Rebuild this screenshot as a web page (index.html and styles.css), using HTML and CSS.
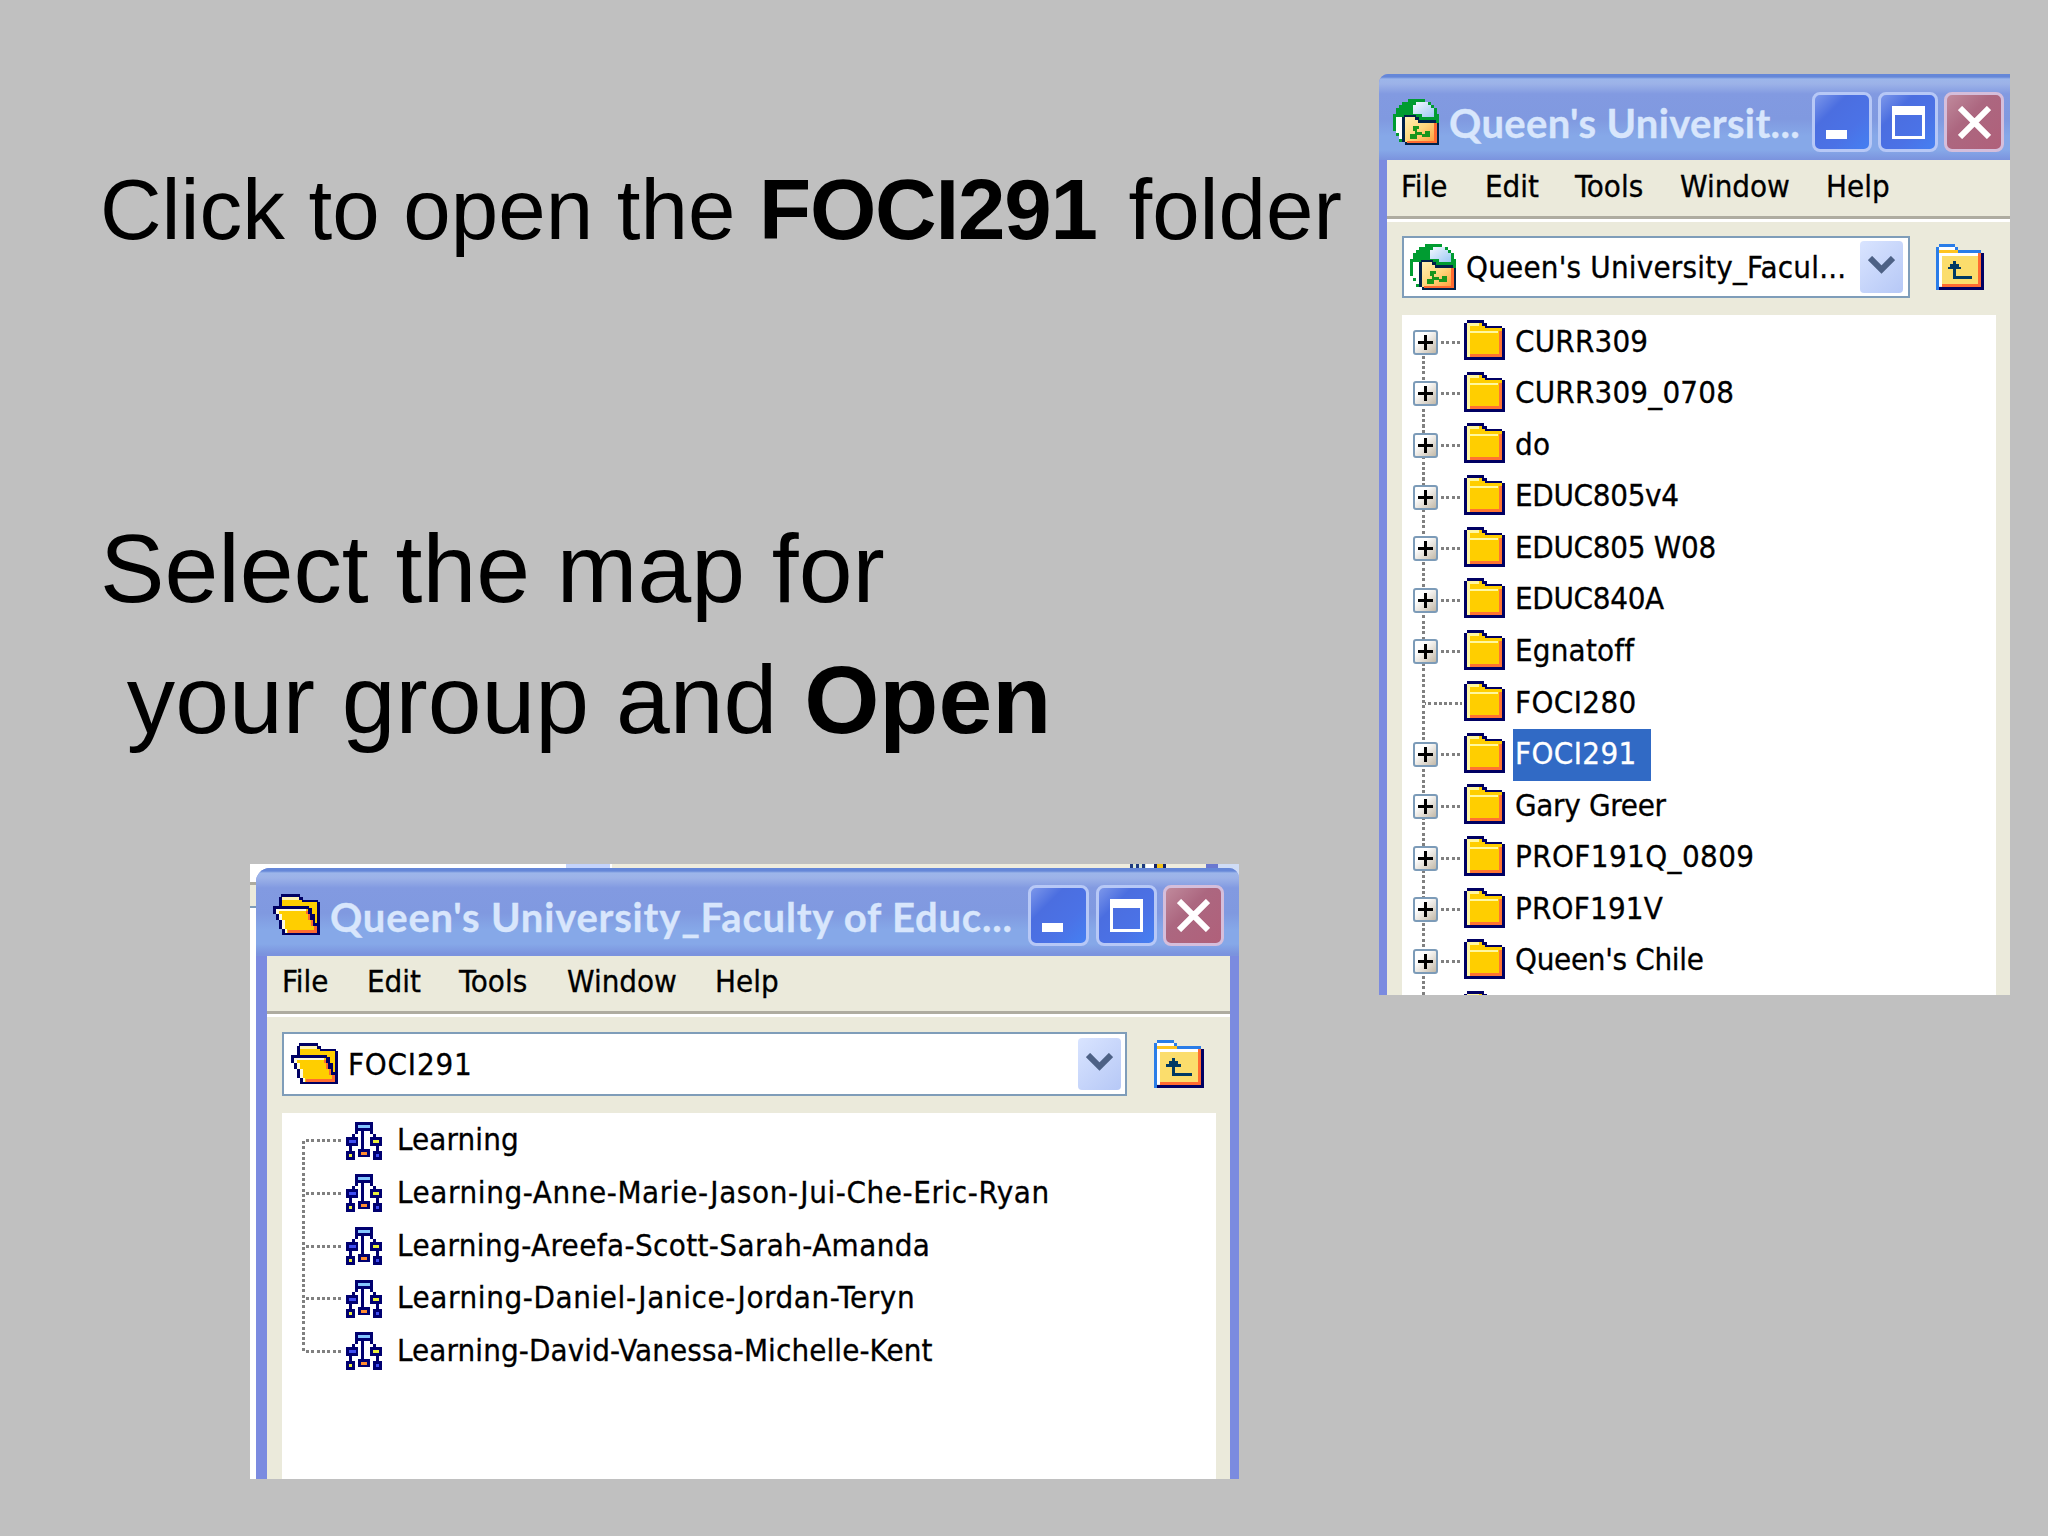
FILE: index.html
```html
<!DOCTYPE html>
<html lang="en">
<head>
  <meta charset="UTF-8">
  <meta name="viewport" content="width=device-width, initial-scale=1.0">
  <title>Open the FOCI291 folder</title>
  <link rel="stylesheet" href="styles.css">
</head>
<body>
  <!-- shared icons -->
  <svg class="defs" width="0" height="0">
    <defs>
      <linearGradient id="peach" x1="0" y1="0" x2="1" y2="1">
        <stop offset="0" stop-color="#ffefb4"/>
        <stop offset="0.5" stop-color="#ffd77c"/>
        <stop offset="1" stop-color="#ff9c3c"/>
      </linearGradient>
      <linearGradient id="ice" x1="0" y1="0" x2="1" y2="1">
        <stop offset="0" stop-color="#f4f8ff"/>
        <stop offset="1" stop-color="#9cc8f4"/>
      </linearGradient>
    </defs>
    <symbol id="folder" viewBox="0 0 41 40">
      <path fill="#000063" d="M3 0H20V3H23V5.500H38V8H41V40H0V3H3z"/>
      <path fill="#ffce00" d="M3 3H18V6H21V8H38V37H3z"/>
      <path fill="#fff7a0" d="M3 3H15V5.500H5.500V10.500H34V13H5.500V37H3z"/>
      <path fill="#ff7331" d="M35 10.500H38V37H6V34H35z"/>
    </symbol>
    <symbol id="open" viewBox="0 0 47 41">
      <path fill="#000063" d="M8 0H27V3H30V5.500H44.500V8H47V41H8.500V35H5.500V26H3V20H0V12H6V3H8z"/>
      <path fill="#ffce00" d="M8.500 3H26V6H29V8H44V29H42V20H39V14H36V12H8.500z"/>
      <path fill="#fff3b0" d="M8.500 3H26V5.500H8.500z"/>
      <path fill="#ffce00" d="M3 14.500H35V20H37V26H40V32H44V38.500H11.500V35H8.500V26H6V20H3z"/>
      <path fill="#fffbe0" d="M3 14.500H33V17H6V20H8.500V26H11.500V35H14V38.500H11.500V35H8.500V26H6V20H3z"/>
      <path fill="#ff6b31" d="M33 17H35V20H37V26H40V32H44V38.500H15V35.500H41V32H38V26H35V20H33z"/>
    </symbol>
    <symbol id="up" viewBox="0 0 50 48">
      <path fill="#2a7de8" d="M3 0H20V3H23V6H47V9H3V47.500H0V3H3z"/>
      <path fill="#000063" d="M47 9H50V47.500H3V44.500H47z"/>
      <path fill="#fff" d="M3 3H20V6H3zM3 9H44V44H3z"/>
      <path fill="#ffc421" d="M3 6H23V9H3z"/>
      <path fill="#fbdd6c" d="M6 12H44V42H6z"/>
      <path fill="#ff6b31" d="M44 9H47V44.500H6V41.500H44z"/>
      <path fill="#003a63" d="M17.500 18H20.500V21H23.500V24H26.500V26.500H20.500V33H38V36H17.500V26.500H12V24H14.500V21H17.500z"/>
    </symbol>
    <symbol id="map" viewBox="0 0 36 38">
      <path fill="#000070" d="M9 0H26.500V8.500H27V12H29.500V14.500H36V23.500H32.500V29H36V38H26.500V29H29.500V23.500H23.500V14.500H26.500V12H24V9H18V26.500H23.500V35H12V26.500H15V9H12V12H9V14.500H12V23.500H6V29H9V38H0V29H3V23.500H0V14.500H6V12H9z"/>
      <path fill="#84c6ff" d="M12 3H23.500V6H12z"/>
      <path fill="#3f4ef0" d="M3 17.500H9.500V20.500H3zM30 32H33V35H30z"/>
      <path fill="#eaf03c" d="M26.500 17.500H33V20.500H26.500zM3 32H6V35H3z"/>
      <path fill="#ff8c31" d="M15 29.500H21V32.500H15z"/>
    </symbol>
    <symbol id="globe" viewBox="0 0 46 46">
      <path fill="#009c31" d="M15 0H32V3H38V6H41V9H44V15H46V24H9V43H6V37H3V32H0V15H3V9H6V6H9V3H15z"/>
      <path fill="#fff" d="M3 18H9V40H6V34H3z"/>
      <path fill="url(#ice)" d="M23 3H35V6H38V9H41V18H29V15H20V6H23z"/>
      <path fill="#00214a" d="M11 15.500H23V18H26V21H43V24H46V46H12V43H9V18H11z"/>
      <path fill="url(#peach)" d="M12 18H22V21H25V24H43V43H12z"/>
      <path fill="#ff6b31" d="M41 24H43.500V43.500H14V41.500H41z"/>
      <path fill="#18961c" d="M20 27H26V30H24V33H29V35H32V32H37V38H29V36H24V40H17V35H22V32H20z"/>
    </symbol>
    <symbol id="max" viewBox="0 0 33 33">
      <path fill="#fff" fill-rule="evenodd" d="M0 0H33V33H0zM3 9V30H30V9z"/>
    </symbol>
    <symbol id="close" viewBox="0 0 33 33">
      <path stroke="#fff" stroke-width="6" d="M2 2L31 31M31 2L2 31"/>
    </symbol>
    <symbol id="arrow" viewBox="0 0 27 18">
      <path fill="none" stroke="#4d6185" stroke-width="6" d="M2 2L13.500 13.500L25 2"/>
    </symbol>
  </svg>

  <div class="slide">
    <p class="step first">Click to open the <b>FOCI291</b> folder</p>
    <p class="step second">Select the map for<br>&nbsp;your group and <b>Open</b></p>

    <div class="shot tree-shot">
      <div class="window">
        <div class="titlebar">
          <svg class="title-icon"><use href="#globe"/></svg>
          <span class="title">Queen's Universit...</span>
          <span class="btn min"></span>
          <span class="btn max"><svg><use href="#max"/></svg></span>
          <span class="btn close"><svg><use href="#close"/></svg></span>
        </div>
        <div class="menu">
          <span>File</span><span>Edit</span><span>Tools</span><span>Window</span><span>Help</span>
        </div>
        <div class="toolbar">
          <div class="combo">
            <svg class="combo-icon"><use href="#globe"/></svg>
            <span class="combo-text">Queen's University_Facul...</span>
            <span class="drop"><svg><use href="#arrow"/></svg></span>
          </div>
          <svg class="up"><use href="#up"/></svg>
        </div>
        <ul class="list tree">
          <li><i class="plus"></i><svg><use href="#folder"/></svg><span>CURR309</span></li>
          <li><i class="plus"></i><svg><use href="#folder"/></svg><span>CURR309_0708</span></li>
          <li><i class="plus"></i><svg><use href="#folder"/></svg><span>do</span></li>
          <li><i class="plus"></i><svg><use href="#folder"/></svg><span class="tight">EDUC805v4</span></li>
          <li><i class="plus"></i><svg><use href="#folder"/></svg><span class="tight">EDUC805 W08</span></li>
          <li><i class="plus"></i><svg><use href="#folder"/></svg><span class="tight">EDUC840A</span></li>
          <li><i class="plus"></i><svg><use href="#folder"/></svg><span>Egnatoff</span></li>
          <li class="leaf"><svg><use href="#folder"/></svg><span class="wide">FOCI280</span></li>
          <li><i class="plus"></i><svg><use href="#folder"/></svg><span class="selected">FOCI291</span></li>
          <li><i class="plus"></i><svg><use href="#folder"/></svg><span class="tight">Gary Greer</span></li>
          <li><i class="plus"></i><svg><use href="#folder"/></svg><span class="wide">PROF191Q_0809</span></li>
          <li><i class="plus"></i><svg><use href="#folder"/></svg><span>PROF191V</span></li>
          <li><i class="plus"></i><svg><use href="#folder"/></svg><span class="tight">Queen's Chile</span></li>
          <li><i class="plus"></i><svg><use href="#folder"/></svg></li>
        </ul>
      </div>
    </div>

    <div class="shot map-shot">
      <!-- slivers of the window behind -->
      <div class="behind-top"><i class="b1"></i><i class="b2"></i><i class="b3"></i><i class="b4"></i><i class="b5"></i><i class="b6"></i><i class="b7"></i></div>
      <div class="behind-left"></div>
      <div class="window">
        <div class="titlebar">
          <svg class="title-icon"><use href="#open"/></svg>
          <span class="title">Queen's University_Faculty of Educ...</span>
          <span class="btn min"></span>
          <span class="btn max"><svg><use href="#max"/></svg></span>
          <span class="btn close"><svg><use href="#close"/></svg></span>
        </div>
        <div class="menu">
          <span>File</span><span>Edit</span><span>Tools</span><span>Window</span><span>Help</span>
        </div>
        <div class="toolbar">
          <div class="combo">
            <svg class="combo-icon"><use href="#open"/></svg>
            <span class="combo-text">FOCI291</span>
            <span class="drop"><svg><use href="#arrow"/></svg></span>
          </div>
          <svg class="up"><use href="#up"/></svg>
        </div>
        <ul class="list maps">
          <li><svg><use href="#map"/></svg><span>Learning</span></li>
          <li><svg><use href="#map"/></svg><span class="wide">Learning-Anne-Marie-Jason-Jui-Che-Eric-Ryan</span></li>
          <li><svg><use href="#map"/></svg><span class="medium">Learning-Areefa-Scott-Sarah-Amanda</span></li>
          <li><svg><use href="#map"/></svg><span class="wide">Learning-Daniel-Janice-Jordan-Teryn</span></li>
          <li><svg><use href="#map"/></svg><span>Learning-David-Vanessa-Michelle-Kent</span></li>
        </ul>
      </div>
    </div>
  </div>
</body>
</html>
```
FILE: styles.css
```css
* {
  box-sizing: border-box;
}
body {
  margin: 0;
  background: #c0c0c0;
}
.defs {
  position: absolute;
}
svg {
  display: block;
  flex: none;
  shape-rendering: crispEdges;
}
.slide {
  position: relative;
  width: 2048px;
  height: 1536px;
  overflow: hidden;
  font-family: "Liberation Sans", Arial, sans-serif;
  color: #000;
}
.step {
  margin: 0;
  padding-left: 100px;
  white-space: nowrap;
}
.first {
  padding-top: 161px;
  font-size: 85.3px;
  line-height: 98px;
}
.first b {
  margin-right: 8px;
  letter-spacing: -1.2px;
}
.second {
  padding-top: 244px;
  font-size: 96.7px;
  line-height: 131px;
}

/* windows */
.shot {
  position: absolute;
  overflow: hidden;
}
.tree-shot {
  left: 1379px;
  top: 74px;
  width: 631px;
  height: 921px;
}
.map-shot {
  left: 250px;
  top: 864px;
  width: 989px;
  height: 615px;
  padding: 4px 0 0 6px;
  background: #fff;
}
.window {
  height: 100%;
  display: flex;
  flex-direction: column;
  background: #7b8be0;
  border-radius: 9px 0 0 0;
  overflow: hidden;
  font-family: "DejaVu Sans Condensed", "DejaVu Sans", sans-serif;
  font-stretch: condensed;
  font-size: 31px;
  -webkit-text-stroke: 0.3px;
}
.map-shot .window {
  position: relative;
  border-radius: 14px 10px 0 0;
}
.titlebar {
  flex: none;
  display: flex;
  align-items: center;
  height: 86px;
  padding: 9px 6px 0 14px;
  background: linear-gradient(#6587d8 0, #6587d8 3px, #9db6ea 5px, #9cb2e8 10px, #829ae1 20px, #8099e0 45px, #86a8e8 62px, #86a8e8 76px, #7b93de 86px);
}
.map-shot .titlebar {
  height: 88px;
  padding: 7px 15px 0 17px;
}
.title-icon {
  width: 46px;
  height: 46px;
}
.map-shot .title-icon {
  width: 47px;
  height: 41px;
  margin-bottom: 2px;
}
.title {
  flex: 1;
  padding: 3px 0 0 10px;
  font: bold 40px/50px Lato, sans-serif;
  letter-spacing: 0.35px;
  white-space: nowrap;
  color: #d8e6fc;
}
.map-shot .title {
  letter-spacing: 0.8px;
}
.btn {
  flex: none;
  width: 60px;
  height: 60px;
  margin-left: 6px;
  border: 3px solid #b7c8f6;
  border-radius: 8px;
  background: linear-gradient(135deg, #7c97ea 0, #4b6ee0 30%, #4b72e6 65%, #4580f2 100%);
}
.map-shot .btn {
  width: 61px;
  height: 61px;
  margin-left: 6.500px;
}
.btn svg {
  width: 33px;
  height: 33px;
  margin: 11px 0 0 11px;
}
.min::before {
  content: "";
  display: block;
  width: 21px;
  height: 9px;
  margin: 35px 0 0 11px;
  background: #fff;
}
.close {
  border-color: #d5bedb;
  background: linear-gradient(135deg, #c08a9c 0, #ac6780 40%, #b0607a 100%);
}
.close svg {
  shape-rendering: auto;
}
.menu {
  flex: none;
  display: grid;
  grid-template-columns: 84px 90px 105px 146px 1fr;
  height: 59px;
  margin-left: 8px;
  padding: 8px 0 0 14px;
  line-height: 36px;
  background: #ebeadb;
  border-bottom: 3px solid #aeaca0;
}
.map-shot .menu {
  grid-template-columns: 85px 92px 108px 148px 1fr;
  height: 58px;
  margin: 0 9px 0 11px;
  padding: 7px 0 0 15px;
}
.toolbar {
  flex: none;
  display: flex;
  align-items: center;
  justify-content: space-between;
  height: 96px;
  margin-left: 8px;
  padding: 0 26px 4px 15px;
  background: #ebeadb;
  border-top: 3px solid #fff;
}
.map-shot .toolbar {
  height: 99px;
  margin: 0 9px 0 11px;
  padding: 0 26px 3px 15px;
}
.combo {
  display: flex;
  align-items: center;
  width: 508px;
  height: 62px;
  padding: 0 5px 0 6px;
  border: 2.500px solid #7f9db9;
  background: #fff;
}
.map-shot .combo {
  width: 845px;
  height: 64px;
  padding: 0 4px 0 7px;
}
.combo-icon {
  width: 46px;
  height: 46px;
}
.map-shot .combo-icon {
  width: 47px;
  height: 41px;
}
.combo-text {
  flex: 1;
  padding-left: 10px;
  letter-spacing: 0.2px;
  white-space: nowrap;
}
.map-shot .combo-text {
  letter-spacing: 0.8px;
}
.drop {
  display: flex;
  align-items: center;
  justify-content: center;
  width: 43px;
  height: 52px;
  border-radius: 4px;
  background: linear-gradient(135deg, #d9e4ff, #b6c8f6);
}
.drop svg {
  width: 27px;
  height: 18px;
  margin-bottom: 4px;
  shape-rendering: auto;
}
.up {
  width: 48px;
  height: 46px;
}
.map-shot .up {
  width: 50px;
  height: 48px;
}

/* lists */
.list {
  flex: 1;
  min-height: 0;
  position: relative;
  margin: 0 0 0 8px;
  padding: 1.500px 0 0;
  list-style: none;
  background: #fff;
  border: solid #ebeadb;
  border-width: 0 14px 0 15px;
  overflow: hidden;
}
.list li {
  display: flex;
  align-items: center;
  white-space: nowrap;
}
.tree li {
  height: 51.580px;
  padding-left: 11px;
}
.tree li::before,
.maps li::before {
  content: "";
  order: 1;
  height: 3px;
  background: repeating-linear-gradient(90deg, #808080 0 3px, #fff 3px 5.300px);
}
.tree li::before {
  width: 21px;
  margin: 0 2px 0 3px;
}
.tree .leaf::before {
  width: 39px;
  margin-left: 10px;
}
.tree svg {
  order: 2;
  width: 41px;
  height: 40px;
  margin-top: -4px;
}
.tree span {
  order: 3;
  height: 51.580px;
  margin-left: 8px;
  padding: 0 14px 0 2px;
  line-height: 49px;
  letter-spacing: 0.2px;
}
.tree .tight {
  letter-spacing: -0.3px;
}
.tree .wide {
  letter-spacing: 0.4px;
}
.tree .selected {
  background: #316ac5;
  color: #fff;
  letter-spacing: 0.4px;
}
.tree::before,
.maps::before {
  content: "";
  position: absolute;
  width: 3px;
  background: repeating-linear-gradient(#808080 0 3px, #fff 3px 5.300px);
}
.tree::before {
  left: 20px;
  top: 30px;
  bottom: 0;
}
.plus {
  position: relative;
  flex: none;
  width: 25px;
  height: 25px;
  border: 2.500px solid #7c9bb8;
  border-radius: 3px;
  background:
    linear-gradient(#000, #000) center / 15px 3px no-repeat,
    linear-gradient(#000, #000) center / 3px 15px no-repeat,
    linear-gradient(135deg, #fff 30%, #c3b9a8);
}
.maps {
  margin: 0 9px 0 11px;
}
.maps li {
  height: 52.670px;
  padding-left: 24px;
}
.maps li::before {
  width: 37px;
  margin-right: 3px;
}
.maps::before {
  left: 20px;
  top: 28px;
  height: 211px;
}
.maps svg {
  order: 2;
  width: 36px;
  height: 38px;
}
.maps span {
  order: 3;
  padding-left: 15px;
  margin-top: -3px;
  letter-spacing: 0.1px;
}
.maps .medium {
  letter-spacing: 0.4px;
}
.maps .wide {
  letter-spacing: 0.6px;
}

/* slivers of the window behind */
.behind-top {
  position: absolute;
  left: 0;
  top: 0;
  display: flex;
  width: 100%;
  height: 12px;
}
.behind-top i {
  height: 4px;
}
.b1 {
  width: 316px;
  background: #fff;
}
.b2 {
  width: 44px;
  background: #c4d3fb;
}
.b3 {
  width: 520px;
  background: #efecdd;
  border-left: 2px solid #fff;
}
.b4 {
  width: 16px;
  background: repeating-linear-gradient(90deg, #1d3a80 0 3px, #d9e8d8 3px 6px);
}
.b5 {
  width: 12px;
  margin-left: 8px;
  background: linear-gradient(90deg, #10206a 0 3px, #f2c21c 3px 9px, #10206a 9px);
}
.b6 {
  width: 40px;
  background: #efecdd;
}
.behind-top .b7 {
  flex: 1;
  height: 12px;
  background: linear-gradient(90deg, #6a78d0 0 12px, #cfdcf6 12px);
}
.behind-left {
  position: absolute;
  left: 0;
  top: 18px;
  width: 10px;
  height: 26px;
  border-top: 3px solid #aeaca0;
  border-bottom: 2px solid #7f9db9;
  background: #ebeadb;
}
```
